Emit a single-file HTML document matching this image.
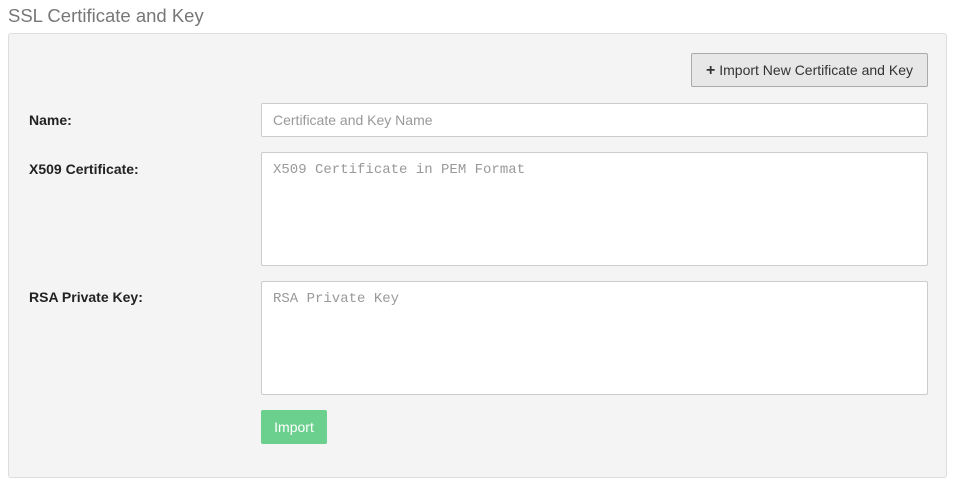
<!DOCTYPE html>
<html><head><style>
body{margin:0;width:954px;height:487px;background:#fff;font-family:"Liberation Sans",sans-serif;position:relative;overflow:hidden}
.h{position:absolute;left:8px;top:5px;font-size:18.5px;color:#777}
.panel{position:absolute;left:8px;top:33px;width:937px;height:443px;background:#f4f4f4;border:1px solid #ddd;border-radius:3px}
.lbl{position:absolute;left:29px;font-size:14px;font-weight:bold;color:#222}
.in{position:absolute;left:261px;width:667px;background:#fff;border:1px solid #ccc;border-radius:2px;box-sizing:border-box;color:#999;font-size:14px;padding:0 11px}
.mono{font-family:"Liberation Mono",monospace;font-size:14px;padding-top:9px}
.btn{position:absolute;left:691px;top:53px;width:237px;height:34px;box-sizing:border-box;background:#e7e7e7;border:1px solid #aaa;border-radius:2px;font-size:14px;color:#333;line-height:32px;text-align:center}
.imp{position:absolute;left:261px;top:410px;width:66px;height:34px;background:#6bcf8e;border-radius:2px;color:#fff;font-size:14px;line-height:34px;text-align:center}
</style></head><body>
<div class="h">SSL Certificate and Key</div>
<div class="panel"></div>
<div class="btn"><b style="font-size:16px">+</b> Import New Certificate and Key</div>
<div class="lbl" style="top:112px">Name:</div>
<div class="lbl" style="top:161px">X509 Certificate:</div>
<div class="lbl" style="top:289px">RSA Private Key:</div>
<div class="in" style="top:103px;height:34px;line-height:32px">Certificate and Key Name</div>
<div class="in mono" style="top:152px;height:114px">X509 Certificate in PEM Format</div>
<div class="in mono" style="top:281px;height:114px">RSA Private Key</div>
<div class="imp">Import</div>
</body></html>
